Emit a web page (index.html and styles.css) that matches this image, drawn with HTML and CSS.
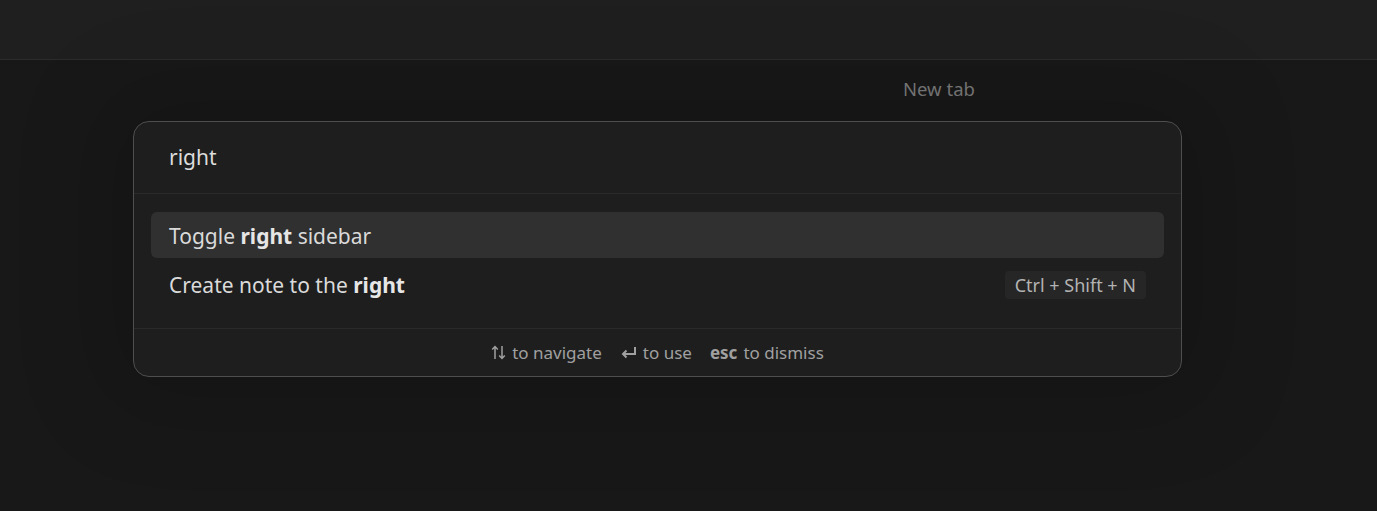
FILE: index.html
```html
<!DOCTYPE html>
<html>

<head>
  <title>Command palette</title>
  <link rel="stylesheet" href="styles.css">
</head>

<body>
  <div class="titlebar"></div>
  <div class="view">
    <div class="view-title">New tab</div>
  </div>

  <div class="prompt">
    <div class="prompt-input">right</div>
    <ul class="results">
      <li class="suggestion selected"><span>Toggle <b>right</b> sidebar</span></li>
      <li class="suggestion">
        <span>Create note to the <b>right</b></span>
        <span class="hotkey">Ctrl + Shift + N</span>
      </li>
    </ul>
    <div class="instructions">
      <span class="instruction">
        <svg class="key" width="15" height="15" viewBox="0 0 15 15" fill="none" stroke="currentColor" stroke-width="1.5">
          <path d="M4 14V1.5M1.2 4.5L4 1.5L6.8 4.5" />
          <path d="M11 1V13.5M8.2 10.5L11 13.5L13.8 10.5" />
        </svg>to navigate
      </span>
      <span class="instruction">
        <svg class="key" width="17" height="15" viewBox="0 0 17 15" fill="none" stroke="currentColor" stroke-width="2">
          <path d="M15 2V9H3" />
          <path d="M6.5 5.5L3 9L6.5 12.5" />
        </svg>to use
      </span>
      <span class="instruction"><span class="key bold">esc</span>to dismiss</span>
    </div>
  </div>
</body>

</html>
```

FILE: styles.css
```css
body {
  margin: 0;
  height: 511px;
  overflow: hidden;
  background: #181818;
  color: #dadada;
  font-family: "Noto Sans", "Open Sans", sans-serif;
}

.titlebar {
  height: 59px;
  background: #1f1f1f;
  border-bottom: 1px solid #2c2c2c;
}

.view {
  display: flex;
  justify-content: flex-start;
  padding-left: 903px;
}

.view-title {
  margin-top: 16px;
  font-size: 18.5px;
  color: #7b7b7b;
}

.prompt {
  position: absolute;
  left: 133px;
  top: 121px;
  width: 1047px;
  background: #1e1e1e;
  border: 1px solid #4e4e4e;
  border-radius: 16px;
  box-shadow: 0 0 90px 30px rgba(0, 0, 0, 0.15);
}

.prompt-input {
  height: 71px;
  line-height: 71px;
  padding-left: 35px;
  font-size: 21px;
  color: #dcdcdc;
  border-bottom: 1px solid #2a2a2a;
}

.results {
  list-style: none;
  margin: 0;
  padding: 18px 17px 20px;
  display: flex;
  flex-direction: column;
  gap: 4px;
}

.suggestion {
  display: flex;
  justify-content: space-between;
  align-items: center;
  height: 46px;
  padding: 0 18px;
  border-radius: 6px;
  font-size: 21px;
  color: #dadada;
}

.suggestion.selected span {
  padding-top: 1px;
}

.suggestion b {
  font-weight: 700;
  color: #e6e6e6;
}

.suggestion.selected {
  background: #303030;
}

.hotkey {
  background: #262626;
  color: #b3b3b3;
  font-size: 18px;
  padding: 2px 10px;
  border-radius: 4px;
}

.instructions {
  height: 47px;
  border-top: 1px solid #2a2a2a;
  display: flex;
  justify-content: center;
  align-items: center;
  gap: 18px;
  font-size: 17px;
  color: #a0a0a0;
}

.instruction {
  display: flex;
  align-items: center;
}

.key {
  margin-right: 6px;
}

.bold {
  font-weight: 700;
}
```
